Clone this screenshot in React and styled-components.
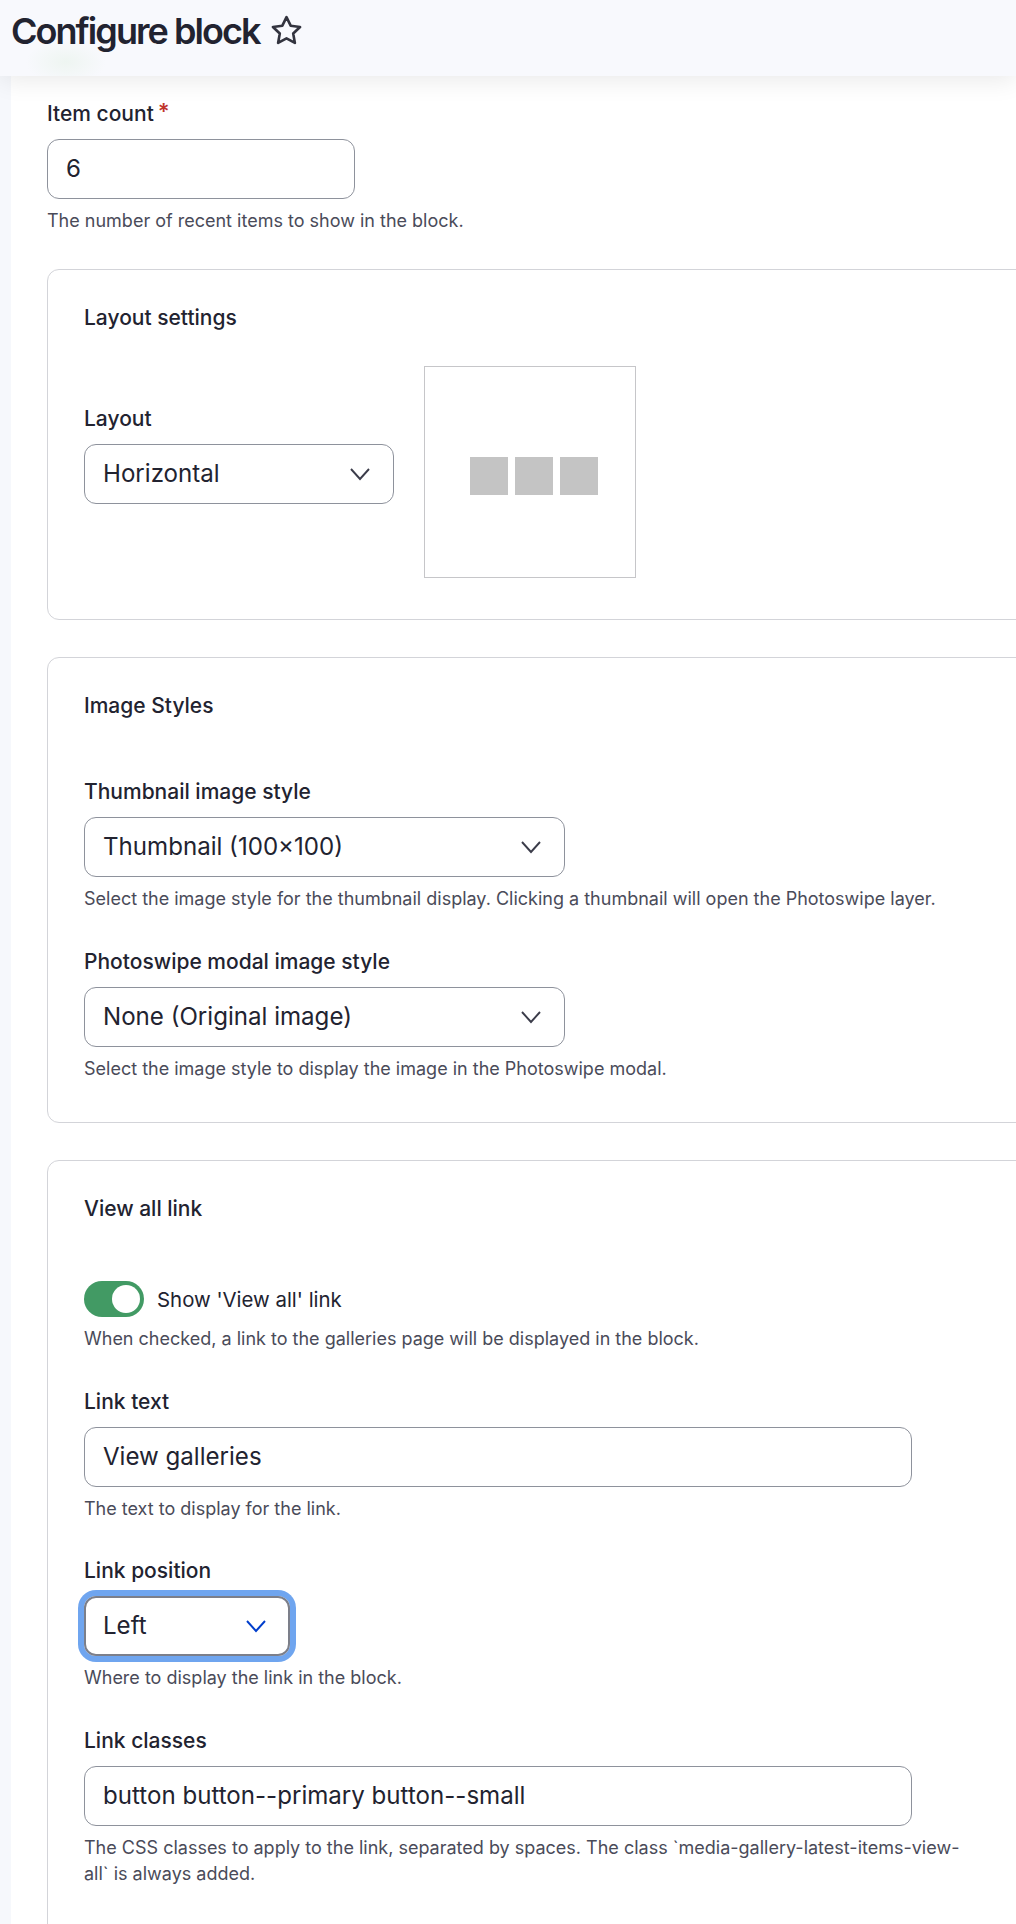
import React from "react";
import styled, { createGlobalStyle } from "styled-components";

const Global = createGlobalStyle`
  html, body { margin: 0; padding: 0; background: #fff; overflow: hidden; }
  body { font-family: Inter, "Liberation Sans", sans-serif; color: #222330; -webkit-font-smoothing: antialiased; }
  * { box-sizing: border-box; }
`;

const Page = styled.div`
  width: 1016px;
  height: 1924px;
  overflow: hidden;
  background: #f6f8fc;
  display: flex;
  flex-direction: column;
`;

const Header = styled.header`
  height: 76px;
  flex: none;
  display: flex;
  align-items: center;
  gap: 9px;
  padding: 0 0 15px 11px;
  background: radial-gradient(ellipse 40px 22px at 66px 62px, #eef5f1, transparent), #f8f9fd;
  box-shadow: 0 4px 24px rgba(0, 0, 0, 0.09);
  position: relative;
  z-index: 1;
`;

const Title = styled.h1`
  margin: 0;
  font-size: 36px;
  line-height: 44px;
  font-weight: 600;
  letter-spacing: -1.95px;
  color: #222330;
`;

const Content = styled.main`
  flex: 1;
  margin-left: 11px;
  background: #fff;
  padding: 24px 0 0 36px;
`;

const Field = styled.div`
  display: flex;
  flex-direction: column;
  margin-bottom: ${(p) => p.$mb ?? 0}px;
`;

const Label = styled.label`
  font-size: 21px;
  line-height: 28px;
  font-weight: 500;
  color: #222330;
  margin-bottom: 11px;
`;

const Required = styled.span`
  color: #c0352b;
  margin-left: 4px;
  font-size: 22px;
  font-weight: 600;
  line-height: 0;
  vertical-align: 2px;
`;

const Input = styled.input`
  display: block;
  width: ${(p) => p.$w}px;
  height: 60px;
  padding: 0 18px 1px;
  border: 1px solid #8e929c;
  border-radius: 12px;
  background: #fff;
  font: 400 24.1px Inter, "Liberation Sans", sans-serif;
  color: #222330;
  outline: none;
`;

const SelectWrap = styled.div`
  position: relative;
  width: ${(p) => p.$w}px;
  height: 60px;
  border-radius: 12px;
  color: ${(p) => (p.$focus ? "#003ecc" : "#3b3c4a")};
  box-shadow: ${(p) => (p.$focus ? "0 0 0 6px #6fa5ef" : "none")};
`;

const Select = styled.select`
  appearance: none;
  display: block;
  width: 100%;
  height: 100%;
  padding: 0 ${(p) => (p.$focus ? 17 : 18)}px 1px;
  border: ${(p) => (p.$focus ? "2px solid #7c7f8a" : "1px solid #8e929c")};
  border-radius: 12px;
  background: #fff;
  font: 400 24.1px Inter, "Liberation Sans", sans-serif;
  color: #222330;
  outline: none;
`;

const Chevron = styled.svg`
  position: absolute;
  right: 24px;
  top: 23px;
  width: 20px;
  height: 14px;
  pointer-events: none;
`;

const Help = styled.div`
  margin-top: 9px;
  font-size: 18px;
  line-height: 26px;
  color: #4a4b59;
  max-width: 898px;
`;

const Card = styled.section`
  width: 1000px;
  margin-top: ${(p) => p.$mt}px;
  height: ${(p) => p.$h}px;
  border: 1px solid #d3d4d9;
  border-radius: 12px;
  padding: 35px 0 0 36px;
  background: #fff;
`;

const Legend = styled.h2`
  margin: 0 0 ${(p) => p.$mb}px;
  font-size: 21px;
  line-height: 26px;
  font-weight: 500;
  color: #222330;
`;

const LayoutRow = styled.div`
  display: flex;
  align-items: flex-start;
  gap: 30px;
`;

const LayoutField = styled.div`
  padding-top: 26px;
`;

const Preview = styled.div`
  width: 212px;
  height: 212px;
  border: 1px solid #c6c6c9;
  display: flex;
  align-items: center;
  justify-content: center;
  gap: 7px;
  padding: 8px 0 0 8px;
  margin-top: -13px;
`;

const Tile = styled.div`
  width: 38px;
  height: 38px;
  background: #c4c4c4;
`;

const ToggleRow = styled.div`
  display: flex;
  align-items: center;
  gap: 13px;
  height: 36px;
`;

const Toggle = styled.div`
  width: 60px;
  height: 36px;
  border-radius: 18px;
  background: #429a64;
  display: flex;
  align-items: center;
  justify-content: flex-end;
  padding-right: 4px;
`;

const Knob = styled.div`
  width: 28px;
  height: 28px;
  border-radius: 50%;
  background: #fff;
`;

const ToggleLabel = styled.span`
  font-size: 20.4px;
  line-height: 28px;
  padding-top: 1px;
  color: #222330;
`;

const Star = () => (
  <svg width="35" height="35" viewBox="0 0 24 24" fill="none" stroke="#33343f" strokeWidth="1.8" strokeLinejoin="round">
    <path d="M12 2.8l2.85 5.9 6.45.9-4.7 4.5 1.15 6.4L12 17.4l-5.75 3.1 1.15-6.4-4.7-4.5 6.45-.9z" />
  </svg>
);

const Down = () => (
  <Chevron viewBox="0 0 20 14" fill="none" stroke="currentColor" strokeWidth="1.9">
    <path d="M1 2l9 10 9-10" />
  </Chevron>
);

const Dropdown = ({ w, value, focus }) => (
  <SelectWrap $w={w} $focus={focus}>
    <Select $focus={focus} defaultValue={value}>
      <option>{value}</option>
    </Select>
    <Down />
  </SelectWrap>
);

export default function App() {
  return (
    <Page>
      <Global />
      <Header>
        <Title>Configure block</Title>
        <Star />
      </Header>
      <Content>
        <Field>
          <Label>
            Item count<Required>*</Required>
          </Label>
          <Input $w={308} defaultValue="6" />
          <Help>The number of recent items to show in the block.</Help>
        </Field>

        <Card $mt={35} $h={351}>
          <Legend $mb={48}>Layout settings</Legend>
          <LayoutRow>
            <LayoutField>
              <Label as="div">Layout</Label>
              <Dropdown w={310} value="Horizontal" />
            </LayoutField>
            <Preview>
              <Tile />
              <Tile />
              <Tile />
            </Preview>
          </LayoutRow>
        </Card>

        <Card $mt={37} $h={466}>
          <Legend $mb={59}>Image Styles</Legend>
          <Field $mb={36}>
            <Label>Thumbnail image style</Label>
            <Dropdown w={481} value="Thumbnail (100×100)" />
            <Help>Select the image style for the thumbnail display. Clicking a thumbnail will open the Photoswipe layer.</Help>
          </Field>
          <Field>
            <Label>Photoswipe modal image style</Label>
            <Dropdown w={481} value="None (Original image)" />
            <Help>Select the image style to display the image in the Photoswipe modal.</Help>
          </Field>
        </Card>

        <Card $mt={37} $h={800}>
          <Legend $mb={59}>View all link</Legend>
          <Field $mb={36}>
            <ToggleRow>
              <Toggle>
                <Knob />
              </Toggle>
              <ToggleLabel>Show 'View all' link</ToggleLabel>
            </ToggleRow>
            <Help>When checked, a link to the galleries page will be displayed in the block.</Help>
          </Field>
          <Field $mb={35}>
            <Label>Link text</Label>
            <Input $w={828} defaultValue="View galleries" />
            <Help>The text to display for the link.</Help>
          </Field>
          <Field $mb={36}>
            <Label>Link position</Label>
            <Dropdown w={206} value="Left" focus />
            <Help>Where to display the link in the block.</Help>
          </Field>
          <Field>
            <Label>Link classes</Label>
            <Input $w={828} defaultValue="button button--primary button--small" />
            <Help>The CSS classes to apply to the link, separated by spaces. The class `media-gallery-latest-items-view-all` is always added.</Help>
          </Field>
        </Card>
      </Content>
    </Page>
  );
}
